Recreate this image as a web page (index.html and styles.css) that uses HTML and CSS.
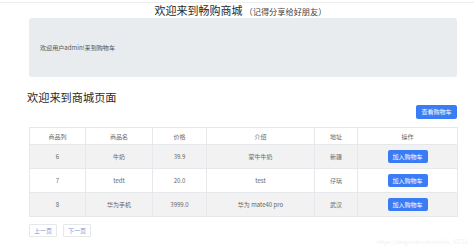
FILE: index.html
```html
<!DOCTYPE html>
<html lang="zh">
<head>
<meta charset="utf-8">
<title>畅购商城</title>
<link rel="stylesheet" href="styles.css">
</head>
<body>
<div class="topline"></div>
<h1 class="title">欢迎来到畅购商城<small class="sub">（记得分享给好朋友）</small></h1>
<main class="wrap">
  <div class="jumbo"><p class="jumbo-text">欢迎用户admin!来到购物车</p></div>
  <h2 class="heading">欢迎来到商城页面</h2>
  <div class="toolbar"><button class="btn">查看购物车</button></div>
  <table class="tbl">
    <colgroup>
      <col class="c1"><col class="c2"><col class="c3"><col class="c4"><col class="c5"><col class="c6">
    </colgroup>
    <thead>
      <tr><th>商品列</th><th>商品名</th><th>价格</th><th>介绍</th><th>地址</th><th>操作</th></tr>
    </thead>
    <tbody>
      <tr class="odd"><td>6</td><td>牛奶</td><td>39.9</td><td>蒙牛牛奶</td><td>新疆</td><td><button class="btn">加入购物车</button></td></tr>
      <tr><td>7</td><td>tedt</td><td>20.0</td><td>test</td><td>仔璃</td><td><button class="btn">加入购物车</button></td></tr>
      <tr class="odd"><td>8</td><td>华为手机</td><td>3999.0</td><td>华为 mate40 pro</td><td>武汉</td><td><button class="btn">加入购物车</button></td></tr>
    </tbody>
  </table>
  <div class="pager">
    <a class="page" href="#">上一页</a>
    <a class="page" href="#">下一页</a>
  </div>
</main>
<div class="mark">https://blog.csdn.net/weixin_45711</div>
</body>
</html>
```
FILE: styles.css
```css
* { box-sizing: border-box; }
html, body { margin: 0; padding: 0; background: #fff; }
body {
  font-family: "Noto Sans CJK SC", "Noto Sans", sans-serif;
  color: #555;
  width: 474px;
  height: 250px;
  overflow: hidden;
}
.topline {
  height: 3px;
  border-bottom: 1px solid #eceef0;
}
.title {
  margin: 0;
  height: 15px;
  font-size: 11px;
  line-height: 15px;
  font-weight: normal;
  color: #2a2a2a;
  text-align: center;
  padding-left: 7px;
}
.sub {
  font-size: 8.2px;
  color: #444;
  margin-left: 2px;
}
.wrap {
  padding: 0 17px 0 29px;
}
.jumbo {
  height: 59px;
  background: #e9ecef;
  border-radius: 3px;
  display: flex;
  align-items: center;
  padding-left: 11px;
}
.jumbo-text {
  margin: 0;
  font-size: 6.1px;
  color: #555;
}
.heading {
  margin: 13px 0 0 -2px;
  height: 15px;
  font-size: 11.2px;
  line-height: 15px;
  font-weight: normal;
  color: #2a2a2a;
}
.toolbar {
  display: flex;
  justify-content: flex-end;
  height: 14px;
}
.btn {
  border: 0;
  background: #3a7cf5;
  color: #fff;
  font-family: inherit;
  font-size: 6px;
  height: 14px;
  width: 41px;
  padding: 0;
  border-radius: 2px;
  line-height: 14px;
}
.tbl {
  margin-top: 8px;
  width: 428px;
  table-layout: fixed;
  border-collapse: collapse;
  font-size: 6px;
  color: #666;
}
.c1 { width: 56px; }
.c2 { width: 67px; }
.c3 { width: 54px; }
.c4 { width: 108px; }
.c5 { width: 43px; }
.c6 { width: 100px; }
.tbl th, .tbl td {
  border: 1px solid #e6e8eb;
  text-align: center;
  padding: 0;
}
.tbl th {
  height: 17px;
  font-weight: normal;
  color: #666;
}
.tbl td {
  height: 24px;
  padding-bottom: 1px;
}
.tbl .odd td { background: #f2f2f2; }
.tbl td .btn { width: 40px; height: 13px; line-height: 13px; }
.pager {
  display: flex;
  gap: 6px;
  margin-top: 7px;
}
.page {
  display: block;
  width: 28px;
  height: 13px;
  line-height: 11px;
  border: 1px solid #e6e8eb;
  text-align: center;
  font-size: 6px;
  color: #6b9ad9;
  text-decoration: none;
  border-radius: 1px;
}
.mark {
  text-align: right;
  font-size: 5.5px;
  color: #f0f1f3;
  padding-right: 6px;
  margin-top: 1px;
}
```
